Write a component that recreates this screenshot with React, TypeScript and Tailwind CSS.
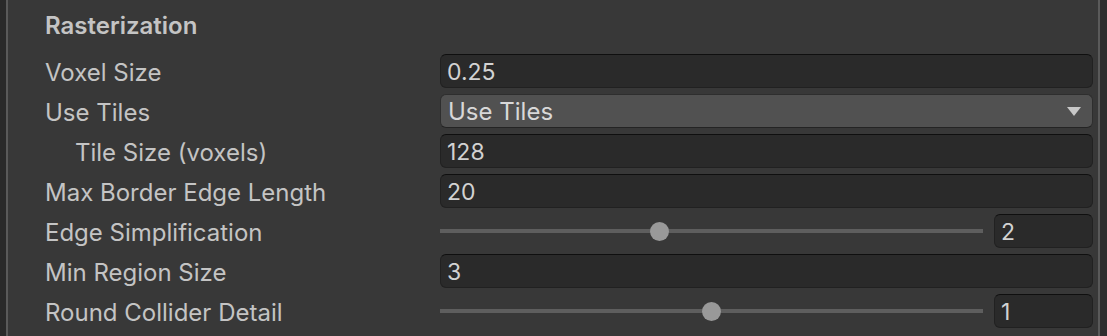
import { ReactNode } from "react";

const FONT = "font-['Inter','Noto_Sans',sans-serif]";

const Label = ({ text, indent }: { text: string; indent?: boolean }) => (
    <div
        className={`w-[395px] shrink-0 pt-[3px] text-[24px] leading-none text-[#c4c4c4] ${
            indent ? "pl-[30px]" : ""
        }`}
    >
        {text}
    </div>
);

const TextField = ({ value, className = "" }: { value: string; className?: string }) => (
    <div
        className={`h-[34px] flex items-center rounded-[6px] border border-[#212121] border-t-[#0f0f0f] bg-[#2a2a2a] pl-[6px] pt-[2px] text-[23px] leading-none text-[#d2d2d2] ${className}`}
    >
        {value}
    </div>
);

const Row = ({ children }: { children: ReactNode }) => (
    <div className="h-[40px] flex items-center">{children}</div>
);

interface SliderProps {
    value: number;
    min: number;
    max: number;
}
const Slider = ({ value, min, max }: SliderProps) => {
    const t = (value - min) / (max - min);
    return (
        <div className="flex-1 flex items-center gap-[11px]">
            <div className="relative flex-1 h-[20px] flex items-center">
                <div className="w-full h-[4px] bg-[#5e5e5e]" />
                <div
                    className="absolute top-[0.5px] w-[19px] h-[19px] rounded-full bg-[#999999]"
                    style={{ left: `calc(${t} * (100% - 19px))` }}
                />
            </div>
            <TextField value={String(value)} className="w-[99px]" />
        </div>
    );
};

export default function App() {
    return (
        <div className={`w-[1107px] h-[336px] flex bg-[#383838] overflow-hidden ${FONT}`}>
            <div className="w-[6px] shrink-0 bg-[#2a2a2a]" />
            <div className="w-[2px] shrink-0 bg-[#5a5a5a]" />
            <div className="flex-1 pl-[37px] pr-[5px] flex flex-col">
                <div className="h-[48px] pt-[3px] flex items-center text-[24px] font-semibold leading-none text-[#c4c4c4]">
                    Rasterization
                </div>
                <div className="h-[3px]" />
                <Row>
                    <Label text="Voxel Size" />
                    <TextField value="0.25" className="flex-1" />
                </Row>
                <Row>
                    <Label text="Use Tiles" />
                    <div className="flex-1 h-[34px] flex items-center justify-between rounded-[6px] border border-[#2e2e2e] border-b-[#242424] bg-[#515151] pl-[7px] pr-[11px] text-[24px] leading-none text-[#d8d8d8]">
                        <span className="pt-[2px]">Use Tiles</span>
                        <svg width="14" height="9" viewBox="0 0 14 9">
                            <path d="M0 0 H14 L7 9 Z" fill="#c8c8c8" />
                        </svg>
                    </div>
                </Row>
                <Row>
                    <Label text="Tile Size (voxels)" indent />
                    <TextField value="128" className="flex-1" />
                </Row>
                <Row>
                    <Label text="Max Border Edge Length" />
                    <TextField value="20" className="flex-1" />
                </Row>
                <Row>
                    <Label text="Edge Simplification" />
                    <Slider value={2} min={0} max={5} />
                </Row>
                <Row>
                    <Label text="Min Region Size" />
                    <TextField value="3" className="flex-1" />
                </Row>
                <Row>
                    <Label text="Round Collider Detail" />
                    <Slider value={1} min={0} max={2} />
                </Row>
            </div>
            <div className="w-[2px] shrink-0 bg-[#5a5a5a]" />
            <div className="w-[7px] shrink-0 bg-[#2e2e2e]" />
        </div>
    );
}
